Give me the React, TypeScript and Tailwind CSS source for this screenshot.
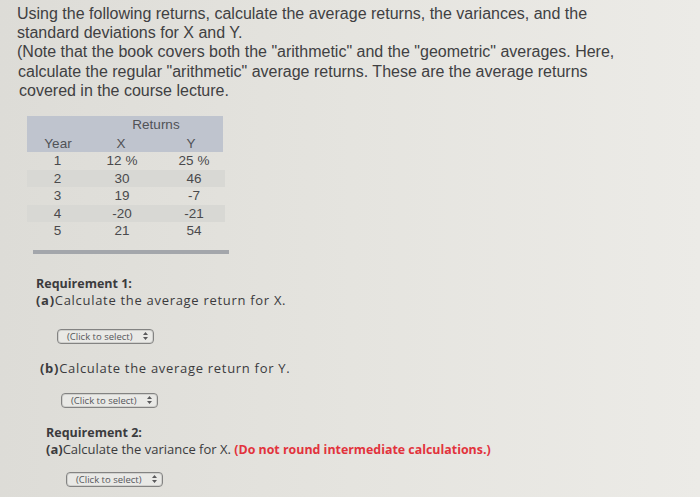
const rows = [
  { year: "1", x: "12 %", y: "25 %" },
  { year: "2", x: "30", y: "46" },
  { year: "3", x: "19", y: "-7" },
  { year: "4", x: "-20", y: "-21" },
  { year: "5", x: "21", y: "54" },
];

function SelectBox() {
  return (
    <div className="flex items-center w-[97px] h-[15px] rounded-[4px] border-[1.5px] border-[#838382] bg-[#e9e9e6] pl-[9px] pr-[5px] text-[9.5px] leading-none text-[#55565a] shadow-[inset_0_0_0_1px_#d0d0cd]">
      <span>(Click to select)</span>
      <svg className="ml-auto" width="5" height="8" viewBox="0 0 5 8">
        <path d="M2.5 0 L5 3 L0 3 Z M2.5 8 L5 5 L0 5 Z" fill="#5a5a5c" />
      </svg>
    </div>
  );
}

export default function App() {
  return (
    <div
      className="w-[700px] h-[497px] overflow-hidden bg-gradient-to-r from-[#dddcd7] via-[#e5e4df] to-[#ecebe7] text-[#3b3b3d]"
      style={{ fontFamily: '"Open Sans", "Liberation Sans", sans-serif' }}
    >
      <div
        className="pl-[17px] pt-[4px] text-[16px] leading-[19.2px] text-[#404042]"
        style={{ fontFamily: '"Liberation Sans", Arial, sans-serif' }}
      >
        <p>Using the following returns, calculate the average returns, the variances, and the</p>
        <p>standard deviations for X and Y.</p>
        <p>(Note that the book covers both the "arithmetic" and the "geometric" averages. Here,</p>
        <p className="pl-[1px]">calculate the regular "arithmetic" average returns. These are the average returns</p>
        <p className="pl-[2px]">covered in the course lecture.</p>
      </div>

      {/* returns table */}
      <div
        className="ml-[27px] mt-[16px] w-[200px] text-[13.5px] leading-none text-[#4a4a4c]"
        style={{ fontFamily: '"Liberation Sans", Arial, sans-serif' }}
      >
        <div className="w-[196px] h-[36px] bg-[#bfc4ce] grid grid-cols-[60px_68px_68px] text-[#505256]">
          <div className="col-start-2 col-span-2 text-center pt-[2px] pl-[2px]">Returns</div>
          <div className="text-center pt-[3px] pl-[2px]">Year</div>
          <div className="text-center pt-[3px]">X</div>
          <div className="text-center pt-[3px] pl-[4px]">Y</div>
        </div>
        {rows.map((r, i) => (
          <div
            key={r.year}
            className={`w-[198px] h-[17.6px] grid grid-cols-[60px_68px_68px] items-center ${
              i % 2 === 1 ? "bg-[#d8d8d4]" : ""
            }`}
          >
            <div className="text-center pl-[1px]">{r.year}</div>
            <div className="text-center pl-[2px]">{r.x}</div>
            <div className="text-center pl-[10px]">{r.y}</div>
          </div>
        ))}
        <div className="mt-[10px] ml-[6px] w-[196px] h-[4px] bg-[#a3a6ab]" />
      </div>

      {/* requirement 1 */}
      <div className="ml-[36px] mt-[21px] text-[13px] leading-[17px] tracking-[0.7px]">
        <p className="font-bold text-[12.5px] tracking-normal">Requirement 1:</p>
        <p>
          <span className="font-bold">(a)</span>Calculate the average return for X.
        </p>
      </div>
      <div className="ml-[57px] mt-[20px]">
        <SelectBox />
      </div>
      <p className="ml-[40px] mt-[16px] text-[13px] leading-[17px] tracking-[0.7px]">
        <span className="font-bold">(b)</span>Calculate the average return for Y.
      </p>
      <div className="ml-[61px] mt-[16px]">
        <SelectBox />
      </div>

      {/* requirement 2 */}
      <div className="ml-[46px] mt-[16px] text-[13px] leading-[17px]">
        <p className="font-bold text-[12.5px]">Requirement 2:</p>
        <p>
          <span>
            <span className="font-bold">(a)</span>Calculate the variance for X.{" "}
          </span>
          <span className="font-bold text-[12.4px] text-[#e2333c]">(Do not round intermediate calculations.)</span>
        </p>
      </div>
      <div className="ml-[66px] mt-[14px]">
        <SelectBox />
      </div>
    </div>
  );
}
